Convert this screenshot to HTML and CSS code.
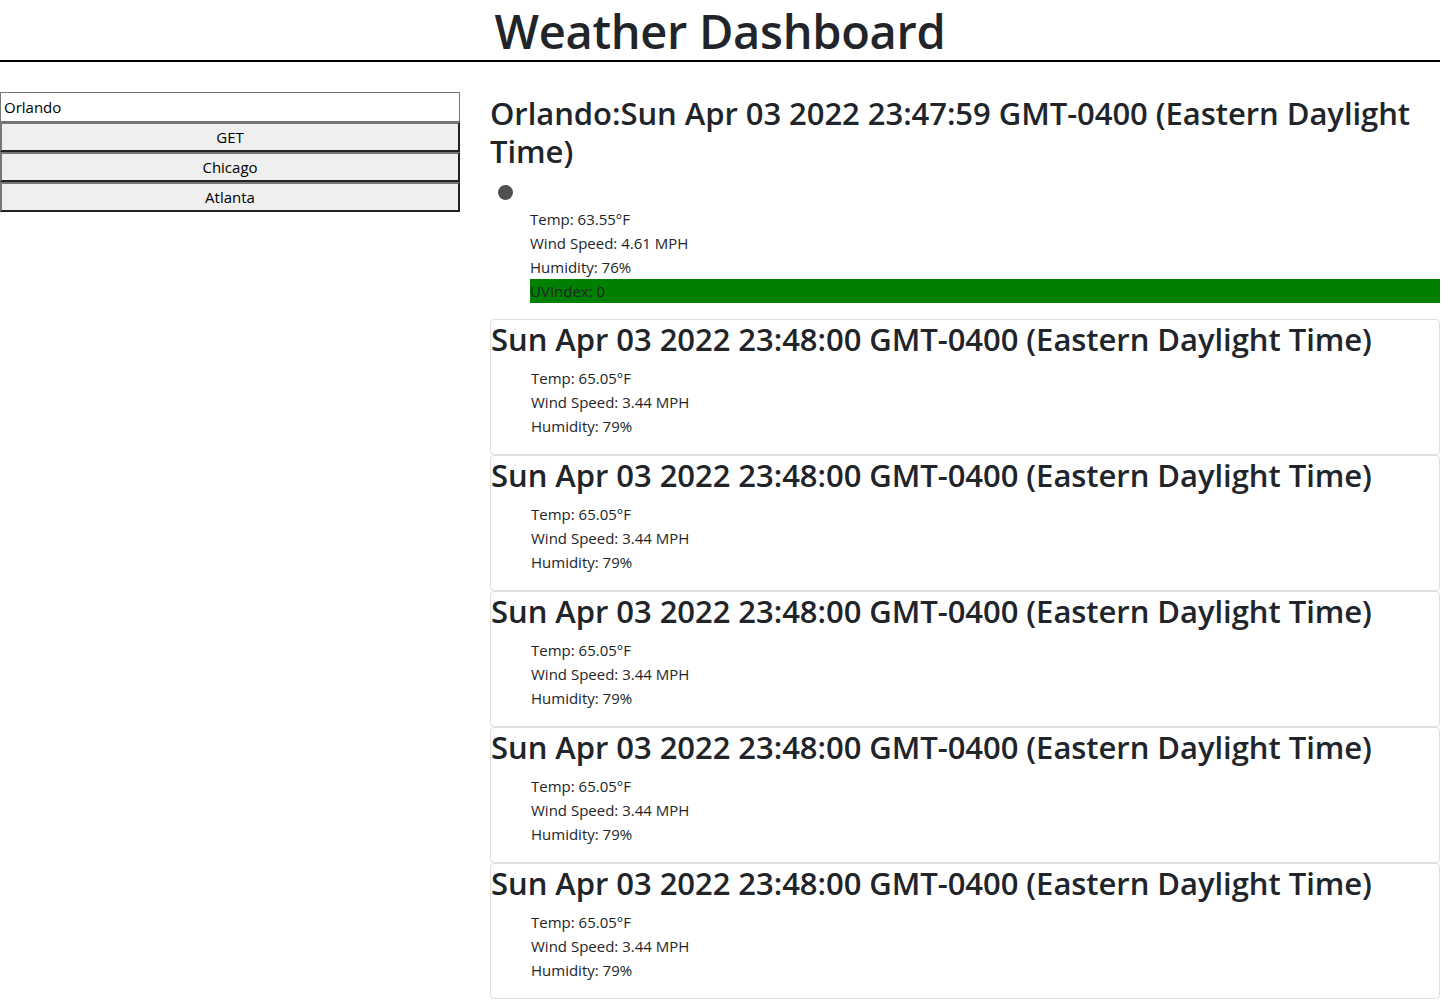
FILE: index.html
```html
<!DOCTYPE html>
<html lang="en">
<head>
    <meta charset="UTF-8">
    <meta name="viewport" content="width=device-width, initial-scale=1.0">
    <title>Weather Dashboard</title>
    <link rel="stylesheet" href="styles.css">
</head>
<body>
    <div class="page">
        <header class="page-header">
            <h1>Weather Dashboard</h1>
        </header>
        <main class="layout">
            <aside class="search">
                <input type="text" id="city-input" value="Orlando">
                <button class="search-btn" id="get-btn">GET</button>
                <button class="search-btn city-btn">Chicago</button>
                <button class="search-btn city-btn">Atlanta</button>
            </aside>
            <section class="forecast">
                <div class="current">
                    <h2 class="day-title">Orlando:Sun Apr 03 2022 23:47:59 GMT-0400 (Eastern Daylight Time)</h2>
                    <div class="icon-row"><span class="weather-icon"></span></div>
                    <ul class="details">
                        <li>Temp: 63.55°F</li>
                        <li>Wind Speed: 4.61 MPH</li>
                        <li>Humidity: 76%</li>
                        <li class="uv-index">UVIndex: 0</li>
                    </ul>
                </div>
                <div class="day-card">
                    <h2 class="day-title">Sun Apr 03 2022 23:48:00 GMT-0400 (Eastern Daylight Time)</h2>
                    <ul class="details">
                        <li>Temp: 65.05°F</li>
                        <li>Wind Speed: 3.44 MPH</li>
                        <li>Humidity: 79%</li>
                    </ul>
                </div>
                <div class="day-card">
                    <h2 class="day-title">Sun Apr 03 2022 23:48:00 GMT-0400 (Eastern Daylight Time)</h2>
                    <ul class="details">
                        <li>Temp: 65.05°F</li>
                        <li>Wind Speed: 3.44 MPH</li>
                        <li>Humidity: 79%</li>
                    </ul>
                </div>
                <div class="day-card">
                    <h2 class="day-title">Sun Apr 03 2022 23:48:00 GMT-0400 (Eastern Daylight Time)</h2>
                    <ul class="details">
                        <li>Temp: 65.05°F</li>
                        <li>Wind Speed: 3.44 MPH</li>
                        <li>Humidity: 79%</li>
                    </ul>
                </div>
                <div class="day-card">
                    <h2 class="day-title">Sun Apr 03 2022 23:48:00 GMT-0400 (Eastern Daylight Time)</h2>
                    <ul class="details">
                        <li>Temp: 65.05°F</li>
                        <li>Wind Speed: 3.44 MPH</li>
                        <li>Humidity: 79%</li>
                    </ul>
                </div>
                <div class="day-card">
                    <h2 class="day-title">Sun Apr 03 2022 23:48:00 GMT-0400 (Eastern Daylight Time)</h2>
                    <ul class="details">
                        <li>Temp: 65.05°F</li>
                        <li>Wind Speed: 3.44 MPH</li>
                        <li>Humidity: 79%</li>
                    </ul>
                </div>
            </section>
        </main>
    </div>
</body>
</html>
```

FILE: styles.css
```css
body {
    margin: 0;
    font-family: "Open Sans", "Noto Sans", Arial, sans-serif;
    font-size: 16px;
    color: #212529;
    background-color: #fff;
}
.page {
    width: 1440px;
}
.page-header {
    border-bottom: 2px solid #000;
    text-align: center;
}
.page-header h1 {
    margin: 0;
    padding-top: 2px;
    height: 58px;
    font-size: 47px;
    font-weight: 600;
    line-height: 58px;
    letter-spacing: -0.3px;
}
.layout {
    display: flex;
    gap: 30px;
    margin-top: 30px;
}
.search {
    display: flex;
    flex-direction: column;
    width: 460px;
    flex-shrink: 0;
}
#city-input {
    box-sizing: border-box;
    height: 30px;
    margin: 0;
    padding: 0 3px;
    border: 1px solid #767676;
    font-family: inherit;
    font-size: 15px;
    color: #000;
}
.search-btn {
    box-sizing: border-box;
    height: 30px;
    margin: 0;
    padding: 0;
    background-color: #efefef;
    border: 2px solid;
    border-color: #767676 #222 #222 #767676;
    font-family: inherit;
    font-size: 15px;
    color: #000;
    cursor: pointer;
}
.forecast {
    flex: 1;
}
.day-title {
    margin: 0 0 8px;
    font-size: 31px;
    font-weight: 600;
    line-height: 38px;
    letter-spacing: -0.05px;
}
.current .day-title {
    margin-top: 2px;
}
.icon-row {
    height: 29px;
}
.weather-icon {
    display: inline-block;
    width: 15px;
    height: 15px;
    margin: 7px 0 0 8px;
    border-radius: 50%;
    background-color: #505050;
}
.details {
    list-style: none;
    margin: 0 0 16px;
    padding-left: 40px;
}
.details li {
    font-size: 15px;
    line-height: 24px;
}
.uv-index {
    background-color: green;
}
.day-card {
    border: 1px solid #dfdfdf;
    border-radius: 4px;
}
```
